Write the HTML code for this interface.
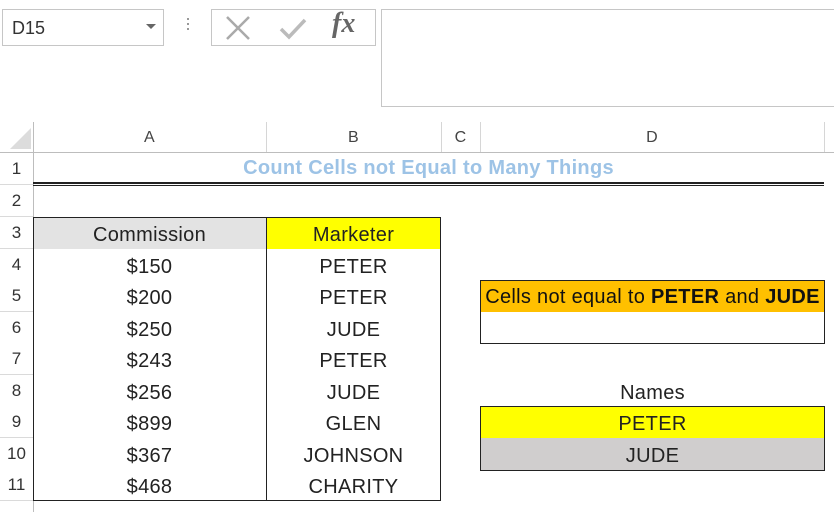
<!DOCTYPE html>
<html><head><style>
body{margin:0;width:834px;height:512px;background:#fff;position:relative;overflow:hidden;font-family:"Liberation Sans",sans-serif;}
.a{position:absolute;}
.t{position:absolute;text-align:center;font-size:20px;letter-spacing:.3px;color:#222;line-height:33px;white-space:nowrap}
.rh{position:absolute;left:0;width:33px;text-align:center;font-size:17px;color:#333;border-bottom:1px solid #dadada;line-height:31px;background:#fff}
</style></head><body>
<div class="a" style="left:2px;top:9px;width:162px;height:37px;border:1px solid #c6c6c6;box-sizing:border-box;"></div>
<div class="a" style="left:12px;top:18px;font-size:18px;color:#333">D15</div>
<div class="a" style="left:146px;top:24px;width:0;height:0;border-left:5px solid transparent;border-right:5px solid transparent;border-top:5px solid #666"></div>
<div class="a" style="left:187px;top:18px;width:2px;height:2px;background:#999;box-shadow:0 5px #999,0 10px #999"></div>
<div class="a" style="left:211px;top:9px;width:165px;height:37px;border:1px solid #c6c6c6;box-sizing:border-box;"></div>
<svg class="a" style="left:224px;top:14px" width="140" height="28"><path d="M3 3L25 25M25 3L3 25" stroke="#aaa" stroke-width="2.5"/><path d="M57 15L65 23L81 6" stroke="#bbb" stroke-width="3.5" fill="none"/></svg>
<div class="a" style="left:332px;top:8px;font-family:'Liberation Serif',serif;font-style:italic;font-weight:bold;font-size:28px;color:#666">fx</div>
<div class="a" style="left:381px;top:9px;width:460px;height:98px;border:1px solid #c6c6c6;box-sizing:border-box;"></div>
<div class="a" style="left:0;top:122px;width:834px;height:30px;border-bottom:1px solid #bdbdbd;"></div>
<svg class="a" style="left:10px;top:128px" width="22" height="22"><path d="M0 21L21 21L21 0Z" fill="#dcdcdc"/></svg>
<div class="a" style="left:33px;top:122px;width:1px;height:390px;background:#bdbdbd"></div>
<div class="a" style="left:266px;top:122px;width:1px;height:30px;background:#d6d6d6"></div>
<div class="a" style="left:441px;top:122px;width:1px;height:30px;background:#d6d6d6"></div>
<div class="a" style="left:480px;top:122px;width:1px;height:30px;background:#d6d6d6"></div>
<div class="a" style="left:824px;top:122px;width:1px;height:30px;background:#d6d6d6"></div>
<div class="t" style="left:33px;top:122px;width:233px;font-size:16px;color:#444;line-height:31px">A</div>
<div class="t" style="left:266px;top:122px;width:175px;font-size:16px;color:#444;line-height:31px">B</div>
<div class="t" style="left:441px;top:122px;width:39px;font-size:16px;color:#444;line-height:31px">C</div>
<div class="t" style="left:480px;top:122px;width:344px;font-size:16px;color:#444;line-height:31px">D</div>
<div class="rh" style="top:153px">1</div><div class="rh" style="top:185px">2</div><div class="rh" style="top:217px">3</div><div class="rh" style="top:249px">4</div><div class="rh" style="top:280px">5</div><div class="rh" style="top:312px">6</div><div class="rh" style="top:343px">7</div><div class="rh" style="top:375px">8</div><div class="rh" style="top:406px">9</div><div class="rh" style="top:438px">10</div><div class="rh" style="top:469px">11</div>
<div class="t" style="left:33px;top:152px;width:791px;font-weight:bold;color:#9dc3e6;font-size:20px">Count Cells not Equal to Many Things</div>
<div class="a" style="left:33px;top:182px;width:791px;height:1px;border-top:2px solid #222;border-bottom:1px solid #222;height:1px"></div>
<div class="a" style="left:33px;top:217px;width:408px;height:284px;border:1px solid #222;box-sizing:border-box"></div>
<div class="a" style="left:266px;top:217px;width:1px;height:284px;background:#222"></div>
<div class="a" style="left:34px;top:218px;width:232px;height:31px;background:#e3e3e3"></div>
<div class="a" style="left:267px;top:218px;width:173px;height:31px;background:#ffff00"></div>
<div class="t" style="left:33px;top:219px;width:233px">Commission</div>
<div class="t" style="left:266px;top:219px;width:175px">Marketer</div>
<div class="t" style="left:33px;top:251px;width:233px">$150</div><div class="t" style="left:266px;top:251px;width:175px">PETER</div>
<div class="t" style="left:33px;top:282px;width:233px">$200</div><div class="t" style="left:266px;top:282px;width:175px">PETER</div>
<div class="t" style="left:33px;top:314px;width:233px">$250</div><div class="t" style="left:266px;top:314px;width:175px">JUDE</div>
<div class="t" style="left:33px;top:345px;width:233px">$243</div><div class="t" style="left:266px;top:345px;width:175px">PETER</div>
<div class="t" style="left:33px;top:377px;width:233px">$256</div><div class="t" style="left:266px;top:377px;width:175px">JUDE</div>
<div class="t" style="left:33px;top:408px;width:233px">$899</div><div class="t" style="left:266px;top:408px;width:175px">GLEN</div>
<div class="t" style="left:33px;top:440px;width:233px">$367</div><div class="t" style="left:266px;top:440px;width:175px">JOHNSON</div>
<div class="t" style="left:33px;top:471px;width:233px">$468</div><div class="t" style="left:266px;top:471px;width:175px">CHARITY</div>
<div class="a" style="left:480px;top:280px;width:345px;height:64px;border:1px solid #222;box-sizing:border-box"></div>
<div class="a" style="left:481px;top:281px;width:343px;height:31px;background:#ffc000"></div>
<div class="t" style="left:481px;top:281px;width:343px;color:#111">Cells not equal to <b>PETER</b> and <b>JUDE</b></div>
<div class="t" style="left:480px;top:377px;width:345px">Names</div>
<div class="a" style="left:480px;top:406px;width:345px;height:65px;border:1px solid #222;box-sizing:border-box"></div>
<div class="a" style="left:481px;top:407px;width:343px;height:31px;background:#ffff00"></div>
<div class="a" style="left:481px;top:438px;width:343px;height:32px;background:#d0cece"></div>
<div class="t" style="left:480px;top:408px;width:345px">PETER</div>
<div class="t" style="left:480px;top:440px;width:345px">JUDE</div>
</body></html>
